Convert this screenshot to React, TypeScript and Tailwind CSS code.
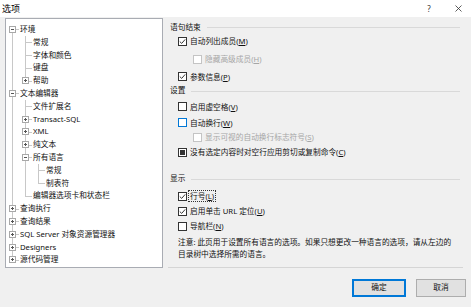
import * as React from "react";

type Row = {
  t: string;
  lv: number;
  exp?: "+" | "-";
  anc?: boolean[];
  first?: boolean;
  last?: boolean;
};

const rows: Row[] = [
  { t: "环境", lv: 0, exp: "-", first: true },
  { t: "常规", lv: 1, anc: [true] },
  { t: "字体和颜色", lv: 1, anc: [true] },
  { t: "键盘", lv: 1, anc: [true] },
  { t: "帮助", lv: 1, exp: "+", anc: [true], last: true },
  { t: "文本编辑器", lv: 0, exp: "-" },
  { t: "文件扩展名", lv: 1, anc: [true] },
  { t: "Transact-SQL", lv: 1, exp: "+", anc: [true] },
  { t: "XML", lv: 1, exp: "+", anc: [true] },
  { t: "纯文本", lv: 1, exp: "+", anc: [true] },
  { t: "所有语言", lv: 1, exp: "-", anc: [true] },
  { t: "常规", lv: 2, anc: [true, true] },
  { t: "制表符", lv: 2, anc: [true, true], last: true },
  { t: "编辑器选项卡和状态栏", lv: 1, anc: [true], last: true },
  { t: "查询执行", lv: 0, exp: "+" },
  { t: "查询结果", lv: 0, exp: "+" },
  { t: "SQL Server 对象资源管理器", lv: 0, exp: "+" },
  { t: "Designers", lv: 0, exp: "+" },
  { t: "源代码管理", lv: 0, exp: "+", last: true },
];

function TreeRow({ r }: { r: Row }) {
  return (
    <div className="flex h-[12.8px] items-stretch">
      {(r.anc ?? []).map((v, i) => (
        <div key={i} className="relative w-[13px] shrink-0">
          {v && <div className="absolute left-[6px] top-0 bottom-0 w-px bg-[#c8c8c8]" />}
        </div>
      ))}
      <div className="relative w-[13px] shrink-0">
        {!r.first && <div className="absolute left-[6px] top-0 h-1/2 w-px bg-[#c8c8c8]" />}
        {!r.last && <div className="absolute left-[6px] top-1/2 bottom-0 w-px bg-[#c8c8c8]" />}
        <div className="absolute left-[6px] right-0 top-1/2 h-px bg-[#c8c8c8]" />
        {r.exp && (
          <div className="absolute left-[3px] top-[3px] flex h-[7px] w-[7px] items-center justify-center border border-[#a8a8a8] bg-white">
            <div className="relative h-[3px] w-[3px]">
              <div className="absolute left-0 right-0 top-[1px] h-px bg-[#555]" />
              {r.exp === "+" && <div className="absolute top-0 bottom-0 left-[1px] w-px bg-[#555]" />}
            </div>
          </div>
        )}
      </div>
      <span className="pl-[1px] leading-[12.8px] whitespace-nowrap text-[#111]">{r.t}</span>
    </div>
  );
}

type CbState = "on" | "off" | "mixed";

function Check({
  state,
  disabled,
  focus,
}: {
  state: CbState;
  disabled?: boolean;
  focus?: boolean;
}) {
  return (
    <div
      className={
        "flex h-[9px] w-[9px] shrink-0 items-center justify-center border bg-white " +
        (disabled ? "border-[#c4c4c4]" : focus ? "border-[#0078d7]" : "border-[#333]")
      }
    >
      {state === "on" && (
        <svg width="7" height="7" viewBox="0 0 7 7">
          <path d="M0.8 3.6 L2.7 5.4 L6.2 1.4" fill="none" stroke="#222" strokeWidth="0.9" />
        </svg>
      )}
      {state === "mixed" && <div className="h-[5px] w-[5px] bg-[#333]" />}
    </div>
  );
}

function Opt({
  label,
  k,
  state,
  mt,
  indent,
  disabled,
  focus,
  ring,
}: {
  label: string;
  k: string;
  state: CbState;
  mt: string;
  indent?: boolean;
  disabled?: boolean;
  focus?: boolean;
  ring?: boolean;
}) {
  return (
    <div className={"flex h-[12px] items-center " + mt + (indent ? " pl-[25px]" : " pl-[10px]")}>
      <Check state={state} disabled={disabled} focus={focus} />
      <span
        className={
          "ml-[1px] whitespace-nowrap leading-[10px] " +
          (disabled ? "text-[#a6a6a6]" : "text-[#111]") +
          (ring ? " border border-dotted border-[#333] px-[1px]" : " border border-transparent px-[1px]")
        }
      >
        {label}(<u>{k}</u>)
      </span>
    </div>
  );
}

function Header({ text, mt }: { text: string; mt: string }) {
  return (
    <div className={"flex h-[12px] items-center pl-[2px] pr-[3px] " + mt}>
      <span className="whitespace-nowrap text-[#111]">{text}</span>
      <div className="ml-[6px] h-px flex-1 bg-[#d9d9d9]" />
    </div>
  );
}

export default function App() {
  return (
    <div className="h-[307px] w-[474px] overflow-hidden bg-white font-['Noto_Sans','Noto_Sans_CJK_SC',sans-serif] text-[7.7px]">
      <div className="flex h-[17px] items-center bg-white pl-[2px] pr-[12px]">
        <span className="text-[9px] text-black">选项</span>
        <div className="flex-1" />
        <span className="w-[10px] text-center text-[8px] text-[#333]">?</span>
        <svg className="ml-[21px]" width="7" height="7" viewBox="0 0 7 7">
          <path d="M0.5 0.5 L6.5 6.5 M6.5 0.5 L0.5 6.5" stroke="#333" strokeWidth="0.8" />
        </svg>
      </div>

      <div className="flex h-[290px] w-[471px] flex-col bg-[#f0f0f0]">
        <div className="mt-[1px] flex h-[251px]">
          <div className="ml-[5px] h-[250px] w-[158px] border border-[#a9acb3] bg-white pt-[4px]">
            {rows.map((r, i) => (
              <TreeRow key={i} r={r} />
            ))}
          </div>

          <div className="ml-[5px] flex w-[295px] flex-col">
            <Header text="语句结束" mt="mt-[3.5px]" />
            <Opt label="自动列出成员" k="M" state="on" mt="mt-[1.5px]" />
            <Opt label="隐藏高级成员" k="H" state="off" mt="mt-[6px]" indent disabled />
            <Opt label="参数信息" k="P" state="on" mt="mt-[5.5px]" />
            <Header text="设置" mt="mt-[2.5px]" />
            <Opt label="启用虚空格" k="V" state="off" mt="mt-[3.5px]" />
            <Opt label="自动换行" k="W" state="off" mt="mt-[4px]" focus />
            <Opt label="显示可视的自动换行标志符号" k="S" state="off" mt="mt-[2.5px]" indent disabled />
            <Opt label="没有选定内容时对空行应用剪切或复制命令" k="C" state="mixed" mt="mt-[3px]" />
            <Header text="显示" mt="mt-[15px]" />
            <Opt label="行号" k="L" state="on" mt="mt-[5px]" ring />
            <Opt label="启用单击 URL 定位" k="U" state="on" mt="mt-[3px]" />
            <Opt label="导航栏" k="N" state="off" mt="mt-[3px]" />
            <p className="mt-[3.5px] pl-[10px] leading-[12px] text-[#111]">
              注意: 此页用于设置所有语言的选项。如果只想更改一种语言的选项，请从左边的
              <br />
              目录树中选择所需的语言。
            </p>
            <div className="mt-[7.5px] h-px bg-[#d5d5d5]" />
          </div>
        </div>

        <div className="mt-[10px] flex justify-end gap-[10px] pr-[5px]">
          <button
            type="button"
            className="flex h-[18px] w-[54px] items-center justify-center border border-[#0078d7] bg-[#e1e1e1] text-[#111] shadow-[inset_0_0_0_1px_#0078d7]"
          >
            确定
          </button>
          <button
            type="button"
            className="flex h-[18px] w-[50px] items-center justify-center border border-[#adadad] bg-[#e1e1e1] text-[#111]"
          >
            取消
          </button>
        </div>
      </div>
    </div>
  );
}
